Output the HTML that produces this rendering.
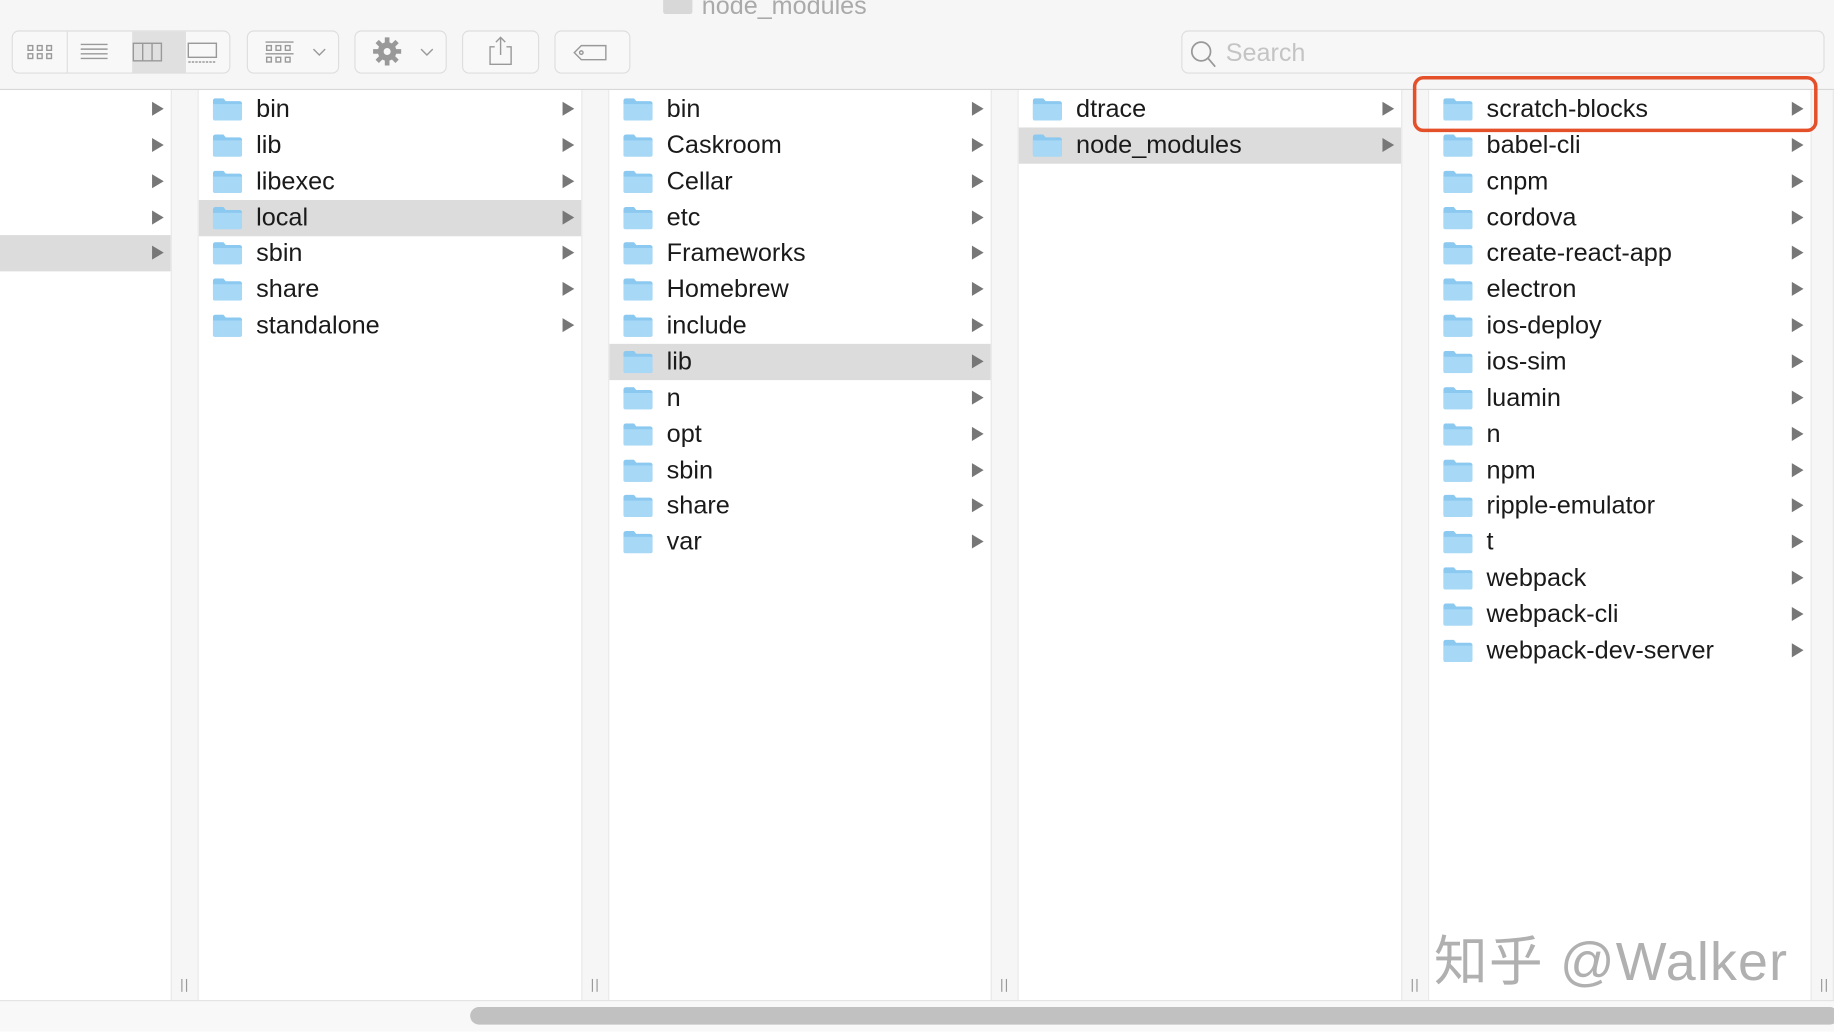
<!DOCTYPE html>
<html><head><meta charset="utf-8"><style>
html,body{margin:0;padding:0;width:1834px;height:1030px;overflow:hidden;background:#fff}
#w{position:absolute;left:0;top:0;width:1568px;height:881px;transform:scale(1.1696);transform-origin:0 0;font-family:"Liberation Sans",sans-serif}
.tb{position:absolute;left:0;top:0;width:1568px;height:76px;background:#f6f6f6;border-bottom:1px solid #d8d8d8}
.btn{position:absolute;top:26px;height:37px;border:1px solid #dedede;border-radius:6px;background:#f8f8f8;box-sizing:border-box}
.col{position:absolute;top:77px;height:778px;background:#fff}
.div{position:absolute;top:77px;height:778px;width:24px;background:#f6f6f6;border-left:1px solid #e8e8e8;border-right:1px solid #e8e8e8;box-sizing:border-box}
.div:after{content:"";position:absolute;left:8px;top:760px;width:3px;height:11px;border-left:1px solid #999;border-right:1px solid #999}
.row{position:absolute;height:31px;left:0;right:0;font-size:21.6px;color:#1a1a1a;line-height:31px}
.row.sel{background:#dcdcdc}
.f{position:absolute;left:12px;top:6px;width:25px;height:19px}
.t{position:absolute;left:49px;top:-1px}
.a{position:absolute;right:6px;top:9px;width:0;height:0;border-left:10px solid #777;border-top:6px solid transparent;border-bottom:6px solid transparent}
</style></head><body><div id="w">
<div class="tb">
<div style="position:absolute;left:567px;top:-6px;width:25px;height:18px;background:#d8d8d8;border-radius:2px"></div>
<div style="position:absolute;left:600px;top:-7px;font-size:21.5px;color:#aaa">node_modules</div>
<div class="btn" style="left:10px;width:187px;overflow:hidden">
<div style="position:absolute;left:0;top:0;width:46px;height:35px;border-right:1px solid #dedede"></div>
<div style="position:absolute;left:102px;top:0;width:46px;height:35px;background:#e0e0e0"></div>
</div>
<svg style="position:absolute;left:10px;top:26px" width="187" height="37" fill="none" stroke="#999" stroke-width="1.2">
<g><rect x="14" y="13" width="4" height="4"/><rect x="22" y="13" width="4" height="4"/><rect x="30" y="13" width="4" height="4"/><rect x="14" y="20" width="4" height="4"/><rect x="22" y="20" width="4" height="4"/><rect x="30" y="20" width="4" height="4"/></g>
<path d="M59 12h23M59 16h23M59 20h23M59 24h23"/>
<rect x="104" y="11" width="24" height="15"/><path d="M112 11v15M120 11v15"/>
<rect x="151" y="11" width="24" height="12"/><path d="M151 27h24" stroke-dasharray="2 1"/>
</svg>
<div class="btn" style="left:211px;width:79px"></div>
<svg style="position:absolute;left:211px;top:26px" width="79" height="37" fill="none" stroke="#999" stroke-width="1.2">
<path d="M16 10h24"/><rect x="17" y="13" width="4" height="4"/><rect x="25" y="13" width="4" height="4"/><rect x="33" y="13" width="4" height="4"/><path d="M16 20h24"/><rect x="17" y="23" width="4" height="4"/><rect x="25" y="23" width="4" height="4"/><rect x="33" y="23" width="4" height="4"/>
<path d="M57 16l5 5 5-5"/></svg>
<div class="btn" style="left:303px;width:79px"></div>
<svg style="position:absolute;left:303px;top:26px" width="79" height="37">
<circle cx="28" cy="18" r="8" fill="#999"/>
<g stroke="#999" stroke-width="4"><path d="M28 6v24M16 18h24M19.5 9.5l17 17M36.5 9.5l-17 17"/></g><circle cx="28" cy="18" r="3" fill="#f8f8f8"/>
<path d="M57 16l5 5 5-5" fill="none" stroke="#999" stroke-width="1.2"/></svg>
<div class="btn" style="left:395px;width:66px"></div>
<svg style="position:absolute;left:395px;top:26px" width="66" height="37" fill="none" stroke="#999" stroke-width="1.2"><path d="M28 14h-4v15h18V14h-4M33 6v15M29 10l4-4 4 4"/></svg>
<div class="btn" style="left:474px;width:65px"></div>
<svg style="position:absolute;left:474px;top:26px" width="65" height="37" fill="none" stroke="#999" stroke-width="1.2"><path d="M23 13h21v12H23l-6-6z"/><circle cx="23" cy="19" r="1.5"/></svg>
<div class="btn" style="left:1010px;width:550px;background:#f7f7f7"></div>
<svg style="position:absolute;left:1016px;top:33px" width="30" height="26" fill="none" stroke="#999" stroke-width="1.5"><circle cx="11" cy="11" r="8"/><path d="M17 17l6 7"/></svg>
<div style="position:absolute;left:1048px;top:33px;font-size:21.5px;color:#c4c4c4">Search</div>
</div>

<div class="col" style="left:0;width:146px">
<div class="row" style="top:1px"><div class="a"></div></div>
<div class="row" style="top:32px"><div class="a"></div></div>
<div class="row" style="top:63px"><div class="a"></div></div>
<div class="row" style="top:94px"><div class="a"></div></div>
<div class="row sel" style="top:124px"><div class="a"></div></div>
</div>
<div class="div" style="left:146px"></div>

<div class="col" style="left:170px;width:327px" id="c1"></div>
<div class="div" style="left:497px"></div>
<div class="col" style="left:521px;width:326px" id="c2"></div>
<div class="div" style="left:847px"></div>
<div class="col" style="left:871px;width:327px" id="c3"></div>
<div class="div" style="left:1198px"></div>
<div class="col" style="left:1222px;width:326px" id="c4"></div>
<div class="div" style="left:1548px;width:20px"></div>

<div style="position:absolute;left:0;top:855px;width:1568px;height:26px;background:#f8f8f8;border-top:1px solid #e4e4e4"></div>
<div style="position:absolute;left:402px;top:861px;width:1170px;height:15px;border-radius:8px;background:#c1c1c1"></div>

<div style="position:absolute;left:1208px;top:65px;width:346px;height:48px;border:3px solid #e4502a;border-radius:9px;box-sizing:border-box"></div>
<div style="position:absolute;left:1226px;top:786px;font-size:46px;color:rgba(150,150,150,.75);font-family:'Liberation Sans','Noto Sans CJK SC',sans-serif;letter-spacing:1px">知乎 @Walker</div>
</div>
<script>
var F='<svg class="f" viewBox="0 0 25 19"><path d="M0 2.5Q0 0 2.5 0H9l2 2.5h11.5Q25 2.5 25 5v12q0 2-2 2H2q-2 0-2-2z" fill="#8cc9f0"/><path d="M0 5h25v12q0 2-2 2H2q-2 0-2-2z" fill="#a7d8f6"/></svg>';
function fill(id,items,sel,off){var h='';items.forEach(function(n,i){h+='<div class="row'+(i===sel?' sel':'')+'" style="top:'+(off+i*30.85)+'px">'+F+'<div class="t">'+n+'</div><div class="a"></div></div>';});document.getElementById(id).innerHTML=h;}
fill('c1',['bin','lib','libexec','local','sbin','share','standalone'],3,1);
fill('c2',['bin','Caskroom','Cellar','etc','Frameworks','Homebrew','include','lib','n','opt','sbin','share','var'],7,1);
fill('c3',['dtrace','node_modules'],1,1);
fill('c4',['scratch-blocks','babel-cli','cnpm','cordova','create-react-app','electron','ios-deploy','ios-sim','luamin','n','npm','ripple-emulator','t','webpack','webpack-cli','webpack-dev-server'],-1,1);
</script>
</body></html>
